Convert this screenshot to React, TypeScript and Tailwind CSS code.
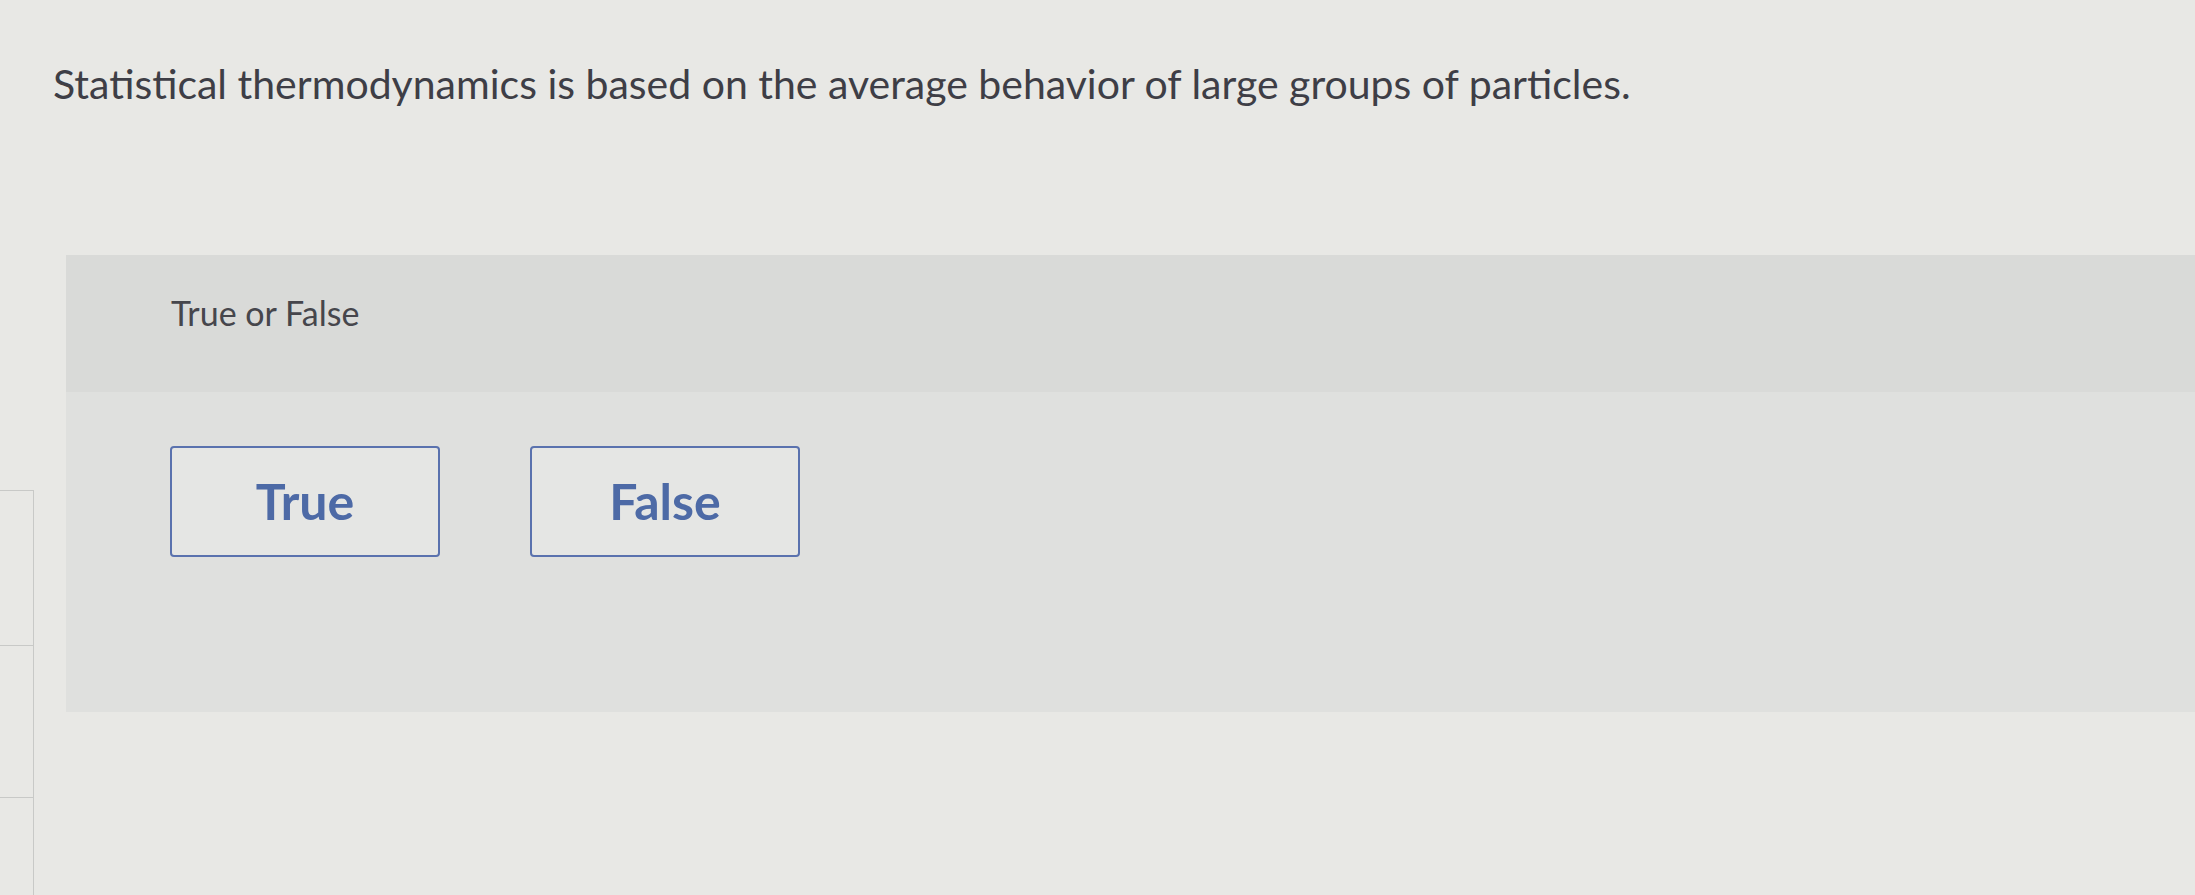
import React from 'react';

const choices = ['True', 'False'];

export default function App() {
    return (
        <div className="w-[2195px] h-[895px] overflow-hidden flex bg-[#e8e8e5] font-['Lato','Open_Sans',sans-serif]">
            {/* faint sidebar edge on the left */}
            <aside className="w-[34px] shrink-0 pt-[490px] flex flex-col">
                <div className="h-[155px] border-t border-r border-[#c8c9c7]" />
                <div className="h-[152px] border-t border-r border-[#c8c9c7]" />
                <div className="flex-1 border-t border-r border-[#c8c9c7]" />
            </aside>

            <main className="flex-1 min-w-0">
                <h1 className="pl-[19px] pt-[59px] text-[41px] leading-[50px] text-[#3e3e46] whitespace-nowrap">
                    Statistical thermodynamics is based on the average behavior of large groups of particles.
                </h1>

                <section className="mt-[146px] ml-[32px] bg-[#dfe0de]">
                    <div className="h-[137px] pl-[105px] pt-[38px] bg-[#d9dad8]">
                        <p className="text-[34px] leading-[40px] text-[#46464c]">True or False</p>
                    </div>

                    <div className="flex gap-[90px] pl-[104px] pt-[54px] pb-[155px]">
                        {choices.map((c) => (
                            <button
                                key={c}
                                className="w-[270px] h-[111px] flex items-center justify-center rounded-[4px] border-2 border-[#5a72ae] bg-[#e5e6e4] text-[50px] font-bold text-[#4d6aa6]"
                            >
                                {c}
                            </button>
                        ))}
                    </div>
                </section>
            </main>
        </div>
    );
}
